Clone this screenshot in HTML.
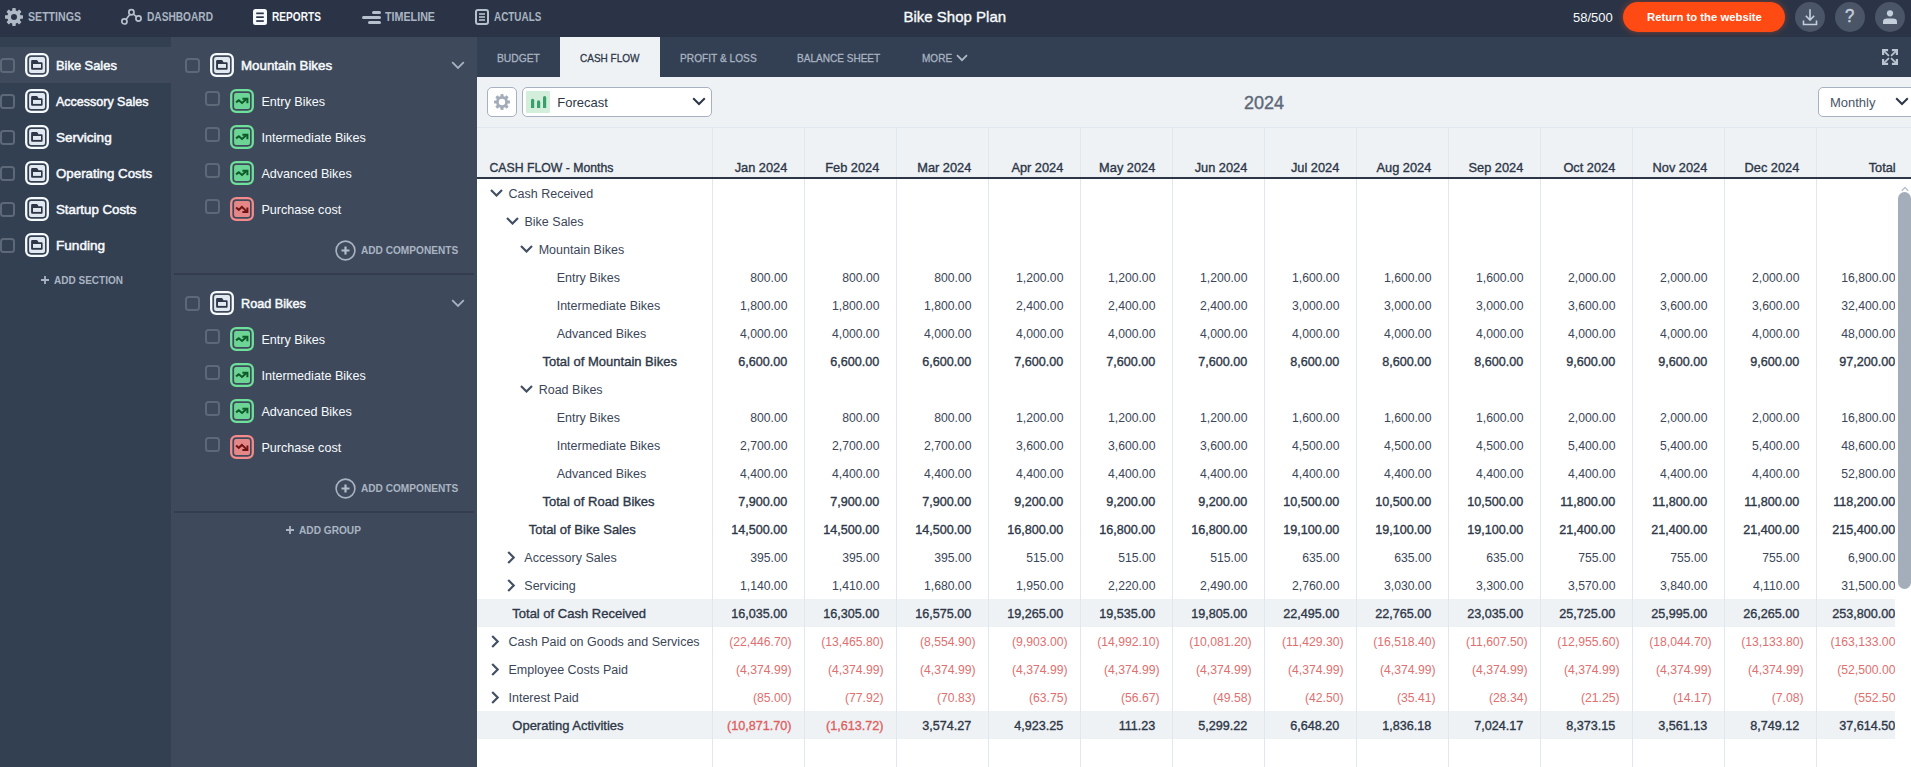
<!DOCTYPE html>
<html><head><meta charset="utf-8"><style>
*{box-sizing:border-box;margin:0;padding:0}
html,body{width:1911px;height:767px;overflow:hidden;background:#eff2f5;font-family:"Liberation Sans",sans-serif}
.abs{position:absolute}
#nav{position:absolute;left:0;top:0;width:1911px;height:37px;background:#2b3446}
.nt{position:absolute;top:9.8px;font-size:12px;font-weight:bold;color:#aab4c2;line-height:14px;white-space:nowrap}
#left{position:absolute;left:0;top:37px;width:171px;height:730px;background:#334052}
#mid{position:absolute;left:171px;top:37px;width:306px;height:730px;background:#3e4a5c}
#hl{position:absolute;left:0;top:47px;width:171px;height:36px;background:#3e4a5c}
.cb{position:absolute;width:15px;height:15px;border:2px solid #5d6879;border-radius:3.5px}
.ic{position:absolute;width:24px;height:24px}
.ic svg{display:block}
.sname{position:absolute;font-size:13.3px;-webkit-text-stroke:0.5px #f7fafc;color:#f7fafc;line-height:20px;white-space:nowrap}
.iname{position:absolute;font-size:12.6px;color:#f7fafc;line-height:20px;white-space:nowrap}
.gchev{position:absolute}
.addc{position:absolute}
.addtxt{position:absolute;font-size:11px;font-weight:bold;color:#aab4c2;line-height:16px;white-space:nowrap;transform-origin:0 0}
.divl{position:absolute;left:174px;width:300px;height:2px;background:#333d4f}
#main{position:absolute;left:477px;top:37px;width:1434px;height:730px;background:#eff2f5;overflow:hidden}
#tabs{position:absolute;left:0;top:0;width:1434px;height:40px;background:#334053}
.tab{position:absolute;top:1px;height:40px;line-height:40px;font-size:11.5px;color:#a9b3c1;-webkit-text-stroke:0.3px currentColor;white-space:nowrap}
.tab.act{background:#eff2f5;color:#2d3748;text-align:center}
#tb{position:absolute;left:0;top:40px;width:1434px;height:50px;background:#eff2f5}
#hdr{position:absolute;left:0;top:90px;width:1434px;height:52px;background:#eff2f5;border-top:1px solid #e1e7ee;border-bottom:2px solid #2d3748}
.hd{position:absolute;top:34px;font-size:12.8px;-webkit-text-stroke:0.35px #2d3748;color:#2d3748;line-height:14px;white-space:nowrap}
#body{position:absolute;left:0;top:142px;width:1434px;height:588px;background:#fff}
.vl{position:absolute;top:127px;width:1px;height:640px;background:#e1e7ee}
.row{position:absolute;left:477px;width:1418px;height:28px;font-size:12.5px;color:#3b4658;line-height:28px}
.row.shade{background:#eff2f5}
.lab{position:absolute;top:1px;white-space:nowrap}
.bold .lab{font-size:13px;-webkit-text-stroke:0.35px #2d3748;color:#2d3748}
.num{position:absolute;top:1px;font-size:12.2px;white-space:nowrap}
.bold .num{font-size:12.6px;-webkit-text-stroke:0.35px currentColor;color:#2d3748}
.neg{color:#de7070}
.bold .neg{color:#de5f5f;-webkit-text-stroke:0.35px #de5f5f}
.hp{visibility:hidden}
.chev{position:absolute;line-height:0}
.chev svg{display:block}
#clip{position:absolute;left:1895px;top:179px;width:16px;height:588px;background:#fff}
</style></head><body>
<div id="nav">
  <svg class="abs" style="left:5px;top:8px" width="18" height="18" viewBox="0 0 18 18"><path fill="#b0bac7" fill-rule="evenodd" d="M15.47 7.27L17.83 7.28A9.00 9.00 0 0 1 17.83 10.72L15.47 10.73A6.70 6.70 0 0 1 14.80 12.35L16.46 14.03A9.00 9.00 0 0 1 14.03 16.46L12.35 14.80A6.70 6.70 0 0 1 10.73 15.47L10.72 17.83A9.00 9.00 0 0 1 7.28 17.83L7.27 15.47A6.70 6.70 0 0 1 5.65 14.80L3.97 16.46A9.00 9.00 0 0 1 1.54 14.03L3.20 12.35A6.70 6.70 0 0 1 2.53 10.73L0.17 10.72A9.00 9.00 0 0 1 0.17 7.28L2.53 7.27A6.70 6.70 0 0 1 3.20 5.65L1.54 3.97A9.00 9.00 0 0 1 3.97 1.54L5.65 3.20A6.70 6.70 0 0 1 7.27 2.53L7.28 0.17A9.00 9.00 0 0 1 10.72 0.17L10.73 2.53A6.70 6.70 0 0 1 12.35 3.20L14.03 1.54A9.00 9.00 0 0 1 16.46 3.97L14.80 5.65A6.70 6.70 0 0 1 15.47 7.27ZM12.00 9.00A3.00 3.00 0 1 0 6.00 9.00A3.00 3.00 0 1 0 12.00 9.00Z"/></svg>
  <div class="nt" style="left:28px;transform:scaleX(0.8833);transform-origin:0 0;">SETTINGS</div>
  <svg class="abs" style="left:119px;top:7px" width="24" height="20" viewBox="0 0 24 20"><path d="M5.4 14.4 L12.4 5.4 M12.4 5.4 L19.5 11.5" stroke="#b7c1cd" stroke-width="1.6" fill="none"/><circle cx="5.4" cy="14.4" r="2.6" fill="#2b3446" stroke="#b7c1cd" stroke-width="1.7"/><circle cx="12.4" cy="5.3" r="2.6" fill="#2b3446" stroke="#b7c1cd" stroke-width="1.7"/><circle cx="19.5" cy="11.5" r="2.6" fill="#2b3446" stroke="#b7c1cd" stroke-width="1.7"/></svg>
  <div class="nt" style="left:146.9px;transform:scaleX(0.8462);transform-origin:0 0;">DASHBOARD</div>
  <svg class="abs" style="left:253px;top:9px" width="14" height="16" viewBox="0 0 14 16"><rect x="0" y="0" width="14" height="16" rx="2.5" fill="#f7fafc"/><rect x="3.2" y="3.5" width="7.6" height="1.7" fill="#2b3446"/><rect x="3.2" y="7.3" width="7.6" height="1.7" fill="#2b3446"/><rect x="3.2" y="11.2" width="7.6" height="1.7" fill="#2b3446"/></svg>
  <div class="nt" style="left:272.3px;color:#f7fafc;transform:scaleX(0.8451);transform-origin:0 0;">REPORTS</div>
  <svg class="abs" style="left:362px;top:10px" width="19" height="15" viewBox="0 0 19 15"><path d="M11.5 2.5 h6 M1.5 7.5 h16 M7.5 12.5 h10" stroke="#b7c1cd" stroke-width="3" stroke-linecap="round"/></svg>
  <div class="nt" style="left:385px;transform:scaleX(0.8932);transform-origin:0 0;">TIMELINE</div>
  <svg class="abs" style="left:475px;top:9px" width="14" height="16" viewBox="0 0 14 16"><rect x="1" y="1" width="12" height="14" rx="2" fill="none" stroke="#b7c1cd" stroke-width="2"/><rect x="4" y="4.2" width="6" height="1.6" fill="#b7c1cd"/><rect x="4" y="7.2" width="6" height="1.6" fill="#b7c1cd"/><rect x="4" y="10.2" width="6" height="1.6" fill="#b7c1cd"/></svg>
  <div class="nt" style="left:494px;transform:scaleX(0.8249);transform-origin:0 0;">ACTUALS</div>
  <div class="abs" style="left:903.5px;top:8px;font-size:15px;color:#f7fafc;-webkit-text-stroke:0.35px #f7fafc;line-height:17px;white-space:nowrap">Bike Shop Plan</div>
  <div class="abs" style="left:1573px;top:10px;font-size:13px;color:#f7fafc;line-height:15px;white-space:nowrap">58/500</div>
  <div class="abs" style="left:1623px;top:2px;width:162px;height:30px;border-radius:15px;background:#ff4a14;box-shadow:0 0 6px rgba(255,80,20,0.45);"></div>
  <div class="abs" style="left:1647px;top:10px;font-size:11.3px;font-weight:bold;color:#fff;line-height:14px;white-space:nowrap">Return to the website</div>
  <div class="abs" style="left:1795px;top:2px;width:30px;height:30px;border-radius:50%;background:#4a5568"></div>
  <div class="abs" style="left:1835px;top:2px;width:30px;height:30px;border-radius:50%;background:#4a5568"></div>
  <div class="abs" style="left:1875px;top:2px;width:30px;height:30px;border-radius:50%;background:#4a5568"></div>
  <svg class="abs" style="left:1802px;top:9px" width="16" height="17" viewBox="0 0 16 17"><path d="M8 0.2 V11 M3.8 6.8 L8 11 L12.2 6.8 M1.5 11.5 V15.5 H14.5 V11.5" fill="none" stroke="#c5cfdb" stroke-width="1.6"/></svg>
  <div class="abs" style="left:1845.2px;top:6px;font-size:19px;color:#c5cfdb;-webkit-text-stroke:0.5px #c5cfdb;line-height:20px;transform:scaleX(0.88);transform-origin:0 0">?</div>
  <svg class="abs" style="left:1882px;top:9px" width="16" height="16" viewBox="0 0 16 16"><circle cx="8" cy="4.3" r="3.1" fill="#c5cfdb"/><path d="M1 15 V12.5 Q1 9.5 5 9.5 H11 Q15 9.5 15 12.5 V15 Z" fill="#c5cfdb"/></svg>
</div>
<div id="left"></div>
<div id="hl"></div>
<div id="mid"></div>
<div class="cb" style="left:0px;top:58px"></div><div class="ic" style="left:25px;top:53px"><svg width="24" height="24" viewBox="0 0 24 24"><rect x="1.2" y="1.2" width="21.6" height="21.6" rx="5" fill="none" stroke="#f7fafc" stroke-width="2.3"/><rect x="4.1" y="4.1" width="15.9" height="15.9" rx="2" fill="#e2e8f0"/><path d="M6.1 8.3 Q6.1 7.1 7.3 7.1 H11.5 Q12.6 7.1 13.5 9.2 H16.6 Q17.6 9.2 17.6 10.2 V15.8 Q17.6 16.8 16.6 16.8 H7.1 Q6.1 16.8 6.1 15.8 Z" fill="#2d3748"/><rect x="8" y="11" width="8" height="3.9" fill="#e2e8f0"/></svg></div><div class="sname" style="left:56px;top:55.5px;transform:scaleX(0.9683);transform-origin:0 0;">Bike Sales</div><div class="cb" style="left:0px;top:94px"></div><div class="ic" style="left:25px;top:89px"><svg width="24" height="24" viewBox="0 0 24 24"><rect x="1.2" y="1.2" width="21.6" height="21.6" rx="5" fill="none" stroke="#f7fafc" stroke-width="2.3"/><rect x="4.1" y="4.1" width="15.9" height="15.9" rx="2" fill="#e2e8f0"/><path d="M6.1 8.3 Q6.1 7.1 7.3 7.1 H11.5 Q12.6 7.1 13.5 9.2 H16.6 Q17.6 9.2 17.6 10.2 V15.8 Q17.6 16.8 16.6 16.8 H7.1 Q6.1 16.8 6.1 15.8 Z" fill="#2d3748"/><rect x="8" y="11" width="8" height="3.9" fill="#e2e8f0"/></svg></div><div class="sname" style="left:56px;top:91.5px;transform:scaleX(0.9400);transform-origin:0 0;">Accessory Sales</div><div class="cb" style="left:0px;top:130px"></div><div class="ic" style="left:25px;top:125px"><svg width="24" height="24" viewBox="0 0 24 24"><rect x="1.2" y="1.2" width="21.6" height="21.6" rx="5" fill="none" stroke="#f7fafc" stroke-width="2.3"/><rect x="4.1" y="4.1" width="15.9" height="15.9" rx="2" fill="#e2e8f0"/><path d="M6.1 8.3 Q6.1 7.1 7.3 7.1 H11.5 Q12.6 7.1 13.5 9.2 H16.6 Q17.6 9.2 17.6 10.2 V15.8 Q17.6 16.8 16.6 16.8 H7.1 Q6.1 16.8 6.1 15.8 Z" fill="#2d3748"/><rect x="8" y="11" width="8" height="3.9" fill="#e2e8f0"/></svg></div><div class="sname" style="left:56px;top:127.5px;transform:scaleX(1.0182);transform-origin:0 0;">Servicing</div><div class="cb" style="left:0px;top:166px"></div><div class="ic" style="left:25px;top:161px"><svg width="24" height="24" viewBox="0 0 24 24"><rect x="1.2" y="1.2" width="21.6" height="21.6" rx="5" fill="none" stroke="#f7fafc" stroke-width="2.3"/><rect x="4.1" y="4.1" width="15.9" height="15.9" rx="2" fill="#e2e8f0"/><path d="M6.1 8.3 Q6.1 7.1 7.3 7.1 H11.5 Q12.6 7.1 13.5 9.2 H16.6 Q17.6 9.2 17.6 10.2 V15.8 Q17.6 16.8 16.6 16.8 H7.1 Q6.1 16.8 6.1 15.8 Z" fill="#2d3748"/><rect x="8" y="11" width="8" height="3.9" fill="#e2e8f0"/></svg></div><div class="sname" style="left:56px;top:163.5px;transform:scaleX(1.0002);transform-origin:0 0;">Operating Costs</div><div class="cb" style="left:0px;top:202px"></div><div class="ic" style="left:25px;top:197px"><svg width="24" height="24" viewBox="0 0 24 24"><rect x="1.2" y="1.2" width="21.6" height="21.6" rx="5" fill="none" stroke="#f7fafc" stroke-width="2.3"/><rect x="4.1" y="4.1" width="15.9" height="15.9" rx="2" fill="#e2e8f0"/><path d="M6.1 8.3 Q6.1 7.1 7.3 7.1 H11.5 Q12.6 7.1 13.5 9.2 H16.6 Q17.6 9.2 17.6 10.2 V15.8 Q17.6 16.8 16.6 16.8 H7.1 Q6.1 16.8 6.1 15.8 Z" fill="#2d3748"/><rect x="8" y="11" width="8" height="3.9" fill="#e2e8f0"/></svg></div><div class="sname" style="left:56px;top:199.5px;transform:scaleX(0.9976);transform-origin:0 0;">Startup Costs</div><div class="cb" style="left:0px;top:238px"></div><div class="ic" style="left:25px;top:233px"><svg width="24" height="24" viewBox="0 0 24 24"><rect x="1.2" y="1.2" width="21.6" height="21.6" rx="5" fill="none" stroke="#f7fafc" stroke-width="2.3"/><rect x="4.1" y="4.1" width="15.9" height="15.9" rx="2" fill="#e2e8f0"/><path d="M6.1 8.3 Q6.1 7.1 7.3 7.1 H11.5 Q12.6 7.1 13.5 9.2 H16.6 Q17.6 9.2 17.6 10.2 V15.8 Q17.6 16.8 16.6 16.8 H7.1 Q6.1 16.8 6.1 15.8 Z" fill="#2d3748"/><rect x="8" y="11" width="8" height="3.9" fill="#e2e8f0"/></svg></div><div class="sname" style="left:56px;top:235.5px;transform:scaleX(1.0208);transform-origin:0 0;">Funding</div>
<svg class="abs" style="left:41px;top:276px" width="8" height="8" viewBox="0 0 8 8"><path d="M4 0 V8 M0 4 H8" stroke="#aab4c2" stroke-width="1.8"/></svg>
<div class="addtxt" style="left:54.4px;top:272px;transform:scaleX(0.9096);transform-origin:0 0;">ADD SECTION</div>
<div class="cb" style="left:185px;top:58px"></div><div class="ic" style="left:210px;top:53px"><svg width="24" height="24" viewBox="0 0 24 24"><rect x="1.2" y="1.2" width="21.6" height="21.6" rx="5" fill="none" stroke="#f7fafc" stroke-width="2.3"/><rect x="4.1" y="4.1" width="15.9" height="15.9" rx="2" fill="#e2e8f0"/><path d="M6.1 8.3 Q6.1 7.1 7.3 7.1 H11.5 Q12.6 7.1 13.5 9.2 H16.6 Q17.6 9.2 17.6 10.2 V15.8 Q17.6 16.8 16.6 16.8 H7.1 Q6.1 16.8 6.1 15.8 Z" fill="#2d3748"/><rect x="8" y="11" width="8" height="3.9" fill="#e2e8f0"/></svg></div><div class="sname" style="left:241.4px;top:55.5px;transform:scaleX(1.0022);transform-origin:0 0;">Mountain Bikes</div><svg class="gchev" style="left:451px;top:61px" width="14" height="9" viewBox="0 0 14 9"><path d="M1.2 1.2 L7 7 L12.8 1.2" fill="none" stroke="#a8b2c0" stroke-width="1.8"/></svg><div class="cb" style="left:205px;top:91px"></div><div class="ic" style="left:230px;top:89px"><svg width="24" height="24" viewBox="0 0 24 24"><rect x="1.2" y="1.2" width="21.6" height="21.6" rx="5" fill="none" stroke="#6fe09a" stroke-width="2.3"/><rect x="4.1" y="4.1" width="15.9" height="15.9" rx="2" fill="#6cd494"/><path d="M6.1 13.4 L8.8 11.2 L12 13.9 L16.6 9.9" fill="none" stroke="#0f5a2a" stroke-width="2"/><path d="M12.4 9.7 H17.4 V14.2" fill="none" stroke="#0f5a2a" stroke-width="2"/></svg></div><div class="iname" style="left:261.4px;top:92px">Entry Bikes</div><div class="cb" style="left:205px;top:127px"></div><div class="ic" style="left:230px;top:125px"><svg width="24" height="24" viewBox="0 0 24 24"><rect x="1.2" y="1.2" width="21.6" height="21.6" rx="5" fill="none" stroke="#6fe09a" stroke-width="2.3"/><rect x="4.1" y="4.1" width="15.9" height="15.9" rx="2" fill="#6cd494"/><path d="M6.1 13.4 L8.8 11.2 L12 13.9 L16.6 9.9" fill="none" stroke="#0f5a2a" stroke-width="2"/><path d="M12.4 9.7 H17.4 V14.2" fill="none" stroke="#0f5a2a" stroke-width="2"/></svg></div><div class="iname" style="left:261.4px;top:128px">Intermediate Bikes</div><div class="cb" style="left:205px;top:163px"></div><div class="ic" style="left:230px;top:161px"><svg width="24" height="24" viewBox="0 0 24 24"><rect x="1.2" y="1.2" width="21.6" height="21.6" rx="5" fill="none" stroke="#6fe09a" stroke-width="2.3"/><rect x="4.1" y="4.1" width="15.9" height="15.9" rx="2" fill="#6cd494"/><path d="M6.1 13.4 L8.8 11.2 L12 13.9 L16.6 9.9" fill="none" stroke="#0f5a2a" stroke-width="2"/><path d="M12.4 9.7 H17.4 V14.2" fill="none" stroke="#0f5a2a" stroke-width="2"/></svg></div><div class="iname" style="left:261.4px;top:164px">Advanced Bikes</div><div class="cb" style="left:205px;top:199px"></div><div class="ic" style="left:230px;top:197px"><svg width="24" height="24" viewBox="0 0 24 24"><rect x="1.2" y="1.2" width="21.6" height="21.6" rx="5" fill="none" stroke="#f48a8a" stroke-width="2.3"/><rect x="4.1" y="4.1" width="15.9" height="15.9" rx="2" fill="#e68787"/><path d="M6.1 10.4 L8.8 12.8 L11.9 9.9 L16.6 14.4" fill="none" stroke="#6e1414" stroke-width="2"/><path d="M12.4 14.9 H17.4 V10.4" fill="none" stroke="#6e1414" stroke-width="2"/></svg></div><div class="iname" style="left:261.4px;top:200px">Purchase cost</div><svg class="addc" style="left:335.3px;top:239.5px" width="21" height="21" viewBox="0 0 21 21"><circle cx="10.5" cy="10.5" r="9.4" fill="none" stroke="#a8b2c0" stroke-width="1.6"/><path d="M10.5 6.5 v8 M6.5 10.5 h8" stroke="#b4bdca" stroke-width="2.2"/></svg><div class="addtxt" style="left:361px;top:242px;transform:scaleX(0.9189);transform-origin:0 0;">ADD COMPONENTS</div><div class="divl" style="top:273px"></div>
<div class="cb" style="left:185px;top:296px"></div><div class="ic" style="left:210px;top:291px"><svg width="24" height="24" viewBox="0 0 24 24"><rect x="1.2" y="1.2" width="21.6" height="21.6" rx="5" fill="none" stroke="#f7fafc" stroke-width="2.3"/><rect x="4.1" y="4.1" width="15.9" height="15.9" rx="2" fill="#e2e8f0"/><path d="M6.1 8.3 Q6.1 7.1 7.3 7.1 H11.5 Q12.6 7.1 13.5 9.2 H16.6 Q17.6 9.2 17.6 10.2 V15.8 Q17.6 16.8 16.6 16.8 H7.1 Q6.1 16.8 6.1 15.8 Z" fill="#2d3748"/><rect x="8" y="11" width="8" height="3.9" fill="#e2e8f0"/></svg></div><div class="sname" style="left:241.4px;top:293.5px;transform:scaleX(0.9530);transform-origin:0 0;">Road Bikes</div><svg class="gchev" style="left:451px;top:299px" width="14" height="9" viewBox="0 0 14 9"><path d="M1.2 1.2 L7 7 L12.8 1.2" fill="none" stroke="#a8b2c0" stroke-width="1.8"/></svg><div class="cb" style="left:205px;top:329px"></div><div class="ic" style="left:230px;top:327px"><svg width="24" height="24" viewBox="0 0 24 24"><rect x="1.2" y="1.2" width="21.6" height="21.6" rx="5" fill="none" stroke="#6fe09a" stroke-width="2.3"/><rect x="4.1" y="4.1" width="15.9" height="15.9" rx="2" fill="#6cd494"/><path d="M6.1 13.4 L8.8 11.2 L12 13.9 L16.6 9.9" fill="none" stroke="#0f5a2a" stroke-width="2"/><path d="M12.4 9.7 H17.4 V14.2" fill="none" stroke="#0f5a2a" stroke-width="2"/></svg></div><div class="iname" style="left:261.4px;top:330px">Entry Bikes</div><div class="cb" style="left:205px;top:365px"></div><div class="ic" style="left:230px;top:363px"><svg width="24" height="24" viewBox="0 0 24 24"><rect x="1.2" y="1.2" width="21.6" height="21.6" rx="5" fill="none" stroke="#6fe09a" stroke-width="2.3"/><rect x="4.1" y="4.1" width="15.9" height="15.9" rx="2" fill="#6cd494"/><path d="M6.1 13.4 L8.8 11.2 L12 13.9 L16.6 9.9" fill="none" stroke="#0f5a2a" stroke-width="2"/><path d="M12.4 9.7 H17.4 V14.2" fill="none" stroke="#0f5a2a" stroke-width="2"/></svg></div><div class="iname" style="left:261.4px;top:366px">Intermediate Bikes</div><div class="cb" style="left:205px;top:401px"></div><div class="ic" style="left:230px;top:399px"><svg width="24" height="24" viewBox="0 0 24 24"><rect x="1.2" y="1.2" width="21.6" height="21.6" rx="5" fill="none" stroke="#6fe09a" stroke-width="2.3"/><rect x="4.1" y="4.1" width="15.9" height="15.9" rx="2" fill="#6cd494"/><path d="M6.1 13.4 L8.8 11.2 L12 13.9 L16.6 9.9" fill="none" stroke="#0f5a2a" stroke-width="2"/><path d="M12.4 9.7 H17.4 V14.2" fill="none" stroke="#0f5a2a" stroke-width="2"/></svg></div><div class="iname" style="left:261.4px;top:402px">Advanced Bikes</div><div class="cb" style="left:205px;top:437px"></div><div class="ic" style="left:230px;top:435px"><svg width="24" height="24" viewBox="0 0 24 24"><rect x="1.2" y="1.2" width="21.6" height="21.6" rx="5" fill="none" stroke="#f48a8a" stroke-width="2.3"/><rect x="4.1" y="4.1" width="15.9" height="15.9" rx="2" fill="#e68787"/><path d="M6.1 10.4 L8.8 12.8 L11.9 9.9 L16.6 14.4" fill="none" stroke="#6e1414" stroke-width="2"/><path d="M12.4 14.9 H17.4 V10.4" fill="none" stroke="#6e1414" stroke-width="2"/></svg></div><div class="iname" style="left:261.4px;top:438px">Purchase cost</div><svg class="addc" style="left:335.3px;top:477.5px" width="21" height="21" viewBox="0 0 21 21"><circle cx="10.5" cy="10.5" r="9.4" fill="none" stroke="#a8b2c0" stroke-width="1.6"/><path d="M10.5 6.5 v8 M6.5 10.5 h8" stroke="#b4bdca" stroke-width="2.2"/></svg><div class="addtxt" style="left:361px;top:480px;transform:scaleX(0.9189);transform-origin:0 0;">ADD COMPONENTS</div><div class="divl" style="top:511px"></div>
<svg class="abs" style="left:286px;top:526px" width="8" height="8" viewBox="0 0 8 8"><path d="M4 0 V8 M0 4 H8" stroke="#aab4c2" stroke-width="1.8"/></svg>
<div class="addtxt" style="left:299.3px;top:522px;transform:scaleX(0.9209);transform-origin:0 0;">ADD GROUP</div>
<div id="main">
  <div id="tabs">
    <div class="abs" style="left:83px;top:0;width:100px;height:40px;background:#eff2f5"></div>
    <div class="tab" style="left:20px;transform:scaleX(0.8941);transform-origin:0 0;">BUDGET</div>
    <div class="tab" style="left:103px;color:#2d3748;transform:scaleX(0.8699);transform-origin:0 0;">CASH FLOW</div>
    <div class="tab" style="left:203px;transform:scaleX(0.8842);transform-origin:0 0;">PROFIT &amp; LOSS</div>
    <div class="tab" style="left:320.3px;transform:scaleX(0.8738);transform-origin:0 0;">BALANCE SHEET</div>
    <div class="tab" style="left:444.7px;transform:scaleX(0.8731);transform-origin:0 0;">MORE</div>
    <svg class="abs" style="left:479px;top:17px" width="12" height="8" viewBox="0 0 12 8"><path d="M1 1.2 L6 6.2 L11 1.2" fill="none" stroke="#b0bac6" stroke-width="1.7"/></svg>
    <svg class="abs" style="left:1405px;top:12px" width="16" height="16" viewBox="0 0 16 16"><g fill="none" stroke="#bac4d1" stroke-width="2.2" stroke-linecap="butt"><path d="M1.1 6.1 V1.1 H6.1 M9.9 1.1 H14.9 V6.1 M1.1 9.9 V14.9 H6.1 M9.9 14.9 H14.9 V9.9"/><path stroke-width="1.7" d="M1.6 1.6 L6.9 6.9 M14.4 1.6 L9.1 6.9 M1.6 14.4 L6.9 9.1 M14.4 14.4 L9.1 9.1"/></g></svg>
  </div>
  <div id="tb"></div>
  <div class="abs" style="left:10px;top:50px;width:30px;height:30px;border:1px solid #a7b1bf;border-radius:5px;background:#fff"></div>
  <svg class="abs" style="left:17px;top:57px" width="16" height="16" viewBox="0 0 16 16"><path fill="#a3adba" fill-rule="evenodd" d="M13.80 6.45L15.85 6.47A8.00 8.00 0 0 1 15.85 9.53L13.80 9.55A6.00 6.00 0 0 1 13.20 11.00L14.63 12.47A8.00 8.00 0 0 1 12.47 14.63L11.00 13.20A6.00 6.00 0 0 1 9.55 13.80L9.53 15.85A8.00 8.00 0 0 1 6.47 15.85L6.45 13.80A6.00 6.00 0 0 1 5.00 13.20L3.53 14.63A8.00 8.00 0 0 1 1.37 12.47L2.80 11.00A6.00 6.00 0 0 1 2.20 9.55L0.15 9.53A8.00 8.00 0 0 1 0.15 6.47L2.20 6.45A6.00 6.00 0 0 1 2.80 5.00L1.37 3.53A8.00 8.00 0 0 1 3.53 1.37L5.00 2.80A6.00 6.00 0 0 1 6.45 2.20L6.47 0.15A8.00 8.00 0 0 1 9.53 0.15L9.55 2.20A6.00 6.00 0 0 1 11.00 2.80L12.47 1.37A8.00 8.00 0 0 1 14.63 3.53L13.20 5.00A6.00 6.00 0 0 1 13.80 6.45ZM11.20 8.00A3.20 3.20 0 1 0 4.80 8.00A3.20 3.20 0 1 0 11.20 8.00Z"/></svg>
  <div class="abs" style="left:45px;top:50px;width:190px;height:30px;border:1px solid #a7b1bf;border-radius:5px;background:#fff"></div>
  <div class="abs" style="left:49px;top:54px;width:24px;height:22px;background:#d3eedb;border-radius:1px"></div>
  <svg class="abs" style="left:49px;top:54px" width="24" height="22" viewBox="0 0 24 22"><g fill="#38a169"><path d="M5 17 V9.3 a1.6 1.6 0 0 1 3.2 0 V17z"/><path d="M11 17 V10.9 a1.6 1.6 0 0 1 3.2 0 V17z"/><path d="M17 17 V6.6 a1.6 1.6 0 0 1 3.2 0 V17z"/></g></svg>
  <div class="abs" style="left:80.3px;top:58px;font-size:13px;color:#2d3748;line-height:15px">Forecast</div>
  <svg class="abs" style="left:215px;top:60px" width="14" height="9" viewBox="0 0 14 9"><path d="M1.2 1.2 L7 7 L12.8 1.2" fill="none" stroke="#2d3748" stroke-width="2"/></svg>
  <div class="abs" style="left:767px;top:56px;font-size:18px;color:#5d6879;-webkit-text-stroke:0.4px #5d6879;line-height:20px">2024</div>
  <div class="abs" style="left:1341px;top:50px;width:110px;height:30px;border:1px solid #a7b1bf;border-radius:5px;background:#fff"></div>
  <div class="abs" style="left:1352.9px;top:58px;font-size:13px;color:#4a5568;line-height:15px">Monthly</div>
  <svg class="abs" style="left:1418px;top:60px" width="14" height="9" viewBox="0 0 14 9"><path d="M1.2 1.2 L7 7 L12.8 1.2" fill="none" stroke="#2d3748" stroke-width="2"/></svg>
</div>
<div class="abs" style="left:477px;top:127px;width:1434px;height:50px;background:#eff2f5;border-top:1px solid #e1e7ee"></div>
<div class="abs" style="left:477px;top:179px;width:1434px;height:588px;background:#fff"></div>
<div class="row" style="top:179px"><span class="chev" style="left:12.5px;top:10.3px"><svg width="13" height="8" viewBox="0 0 13 8"><path d="M1 1 L6.5 6.5 L12 1" fill="none" stroke="#435064" stroke-width="2.2"/></svg></span><span class="lab" style="left:31.5px">Cash Received</span></div><div class="row" style="top:207px"><span class="chev" style="left:28.5px;top:10.3px"><svg width="13" height="8" viewBox="0 0 13 8"><path d="M1 1 L6.5 6.5 L12 1" fill="none" stroke="#435064" stroke-width="2.2"/></svg></span><span class="lab" style="left:47.5px">Bike Sales</span></div><div class="row" style="top:235px"><span class="chev" style="left:42.5px;top:10.3px"><svg width="13" height="8" viewBox="0 0 13 8"><path d="M1 1 L6.5 6.5 L12 1" fill="none" stroke="#435064" stroke-width="2.2"/></svg></span><span class="lab" style="left:61.7px">Mountain Bikes</span></div><div class="row" style="top:263px"><span class="lab" style="left:79.7px">Entry Bikes</span><span class="num" style="right:1103.5px">800.00<span class="hp">)</span></span><span class="num" style="right:1011.5px">800.00<span class="hp">)</span></span><span class="num" style="right:919.5px">800.00<span class="hp">)</span></span><span class="num" style="right:827.5px">1,200.00<span class="hp">)</span></span><span class="num" style="right:735.5px">1,200.00<span class="hp">)</span></span><span class="num" style="right:643.5px">1,200.00<span class="hp">)</span></span><span class="num" style="right:551.5px">1,600.00<span class="hp">)</span></span><span class="num" style="right:459.5px">1,600.00<span class="hp">)</span></span><span class="num" style="right:367.5px">1,600.00<span class="hp">)</span></span><span class="num" style="right:275.5px">2,000.00<span class="hp">)</span></span><span class="num" style="right:183.5px">2,000.00<span class="hp">)</span></span><span class="num" style="right:91.5px">2,000.00<span class="hp">)</span></span><span class="num" style="right:-4.5px">16,800.00<span class="hp">)</span></span></div><div class="row" style="top:291px"><span class="lab" style="left:79.7px">Intermediate Bikes</span><span class="num" style="right:1103.5px">1,800.00<span class="hp">)</span></span><span class="num" style="right:1011.5px">1,800.00<span class="hp">)</span></span><span class="num" style="right:919.5px">1,800.00<span class="hp">)</span></span><span class="num" style="right:827.5px">2,400.00<span class="hp">)</span></span><span class="num" style="right:735.5px">2,400.00<span class="hp">)</span></span><span class="num" style="right:643.5px">2,400.00<span class="hp">)</span></span><span class="num" style="right:551.5px">3,000.00<span class="hp">)</span></span><span class="num" style="right:459.5px">3,000.00<span class="hp">)</span></span><span class="num" style="right:367.5px">3,000.00<span class="hp">)</span></span><span class="num" style="right:275.5px">3,600.00<span class="hp">)</span></span><span class="num" style="right:183.5px">3,600.00<span class="hp">)</span></span><span class="num" style="right:91.5px">3,600.00<span class="hp">)</span></span><span class="num" style="right:-4.5px">32,400.00<span class="hp">)</span></span></div><div class="row" style="top:319px"><span class="lab" style="left:79.7px">Advanced Bikes</span><span class="num" style="right:1103.5px">4,000.00<span class="hp">)</span></span><span class="num" style="right:1011.5px">4,000.00<span class="hp">)</span></span><span class="num" style="right:919.5px">4,000.00<span class="hp">)</span></span><span class="num" style="right:827.5px">4,000.00<span class="hp">)</span></span><span class="num" style="right:735.5px">4,000.00<span class="hp">)</span></span><span class="num" style="right:643.5px">4,000.00<span class="hp">)</span></span><span class="num" style="right:551.5px">4,000.00<span class="hp">)</span></span><span class="num" style="right:459.5px">4,000.00<span class="hp">)</span></span><span class="num" style="right:367.5px">4,000.00<span class="hp">)</span></span><span class="num" style="right:275.5px">4,000.00<span class="hp">)</span></span><span class="num" style="right:183.5px">4,000.00<span class="hp">)</span></span><span class="num" style="right:91.5px">4,000.00<span class="hp">)</span></span><span class="num" style="right:-4.5px">48,000.00<span class="hp">)</span></span></div><div class="row bold" style="top:347px"><span class="lab" style="left:65.5px">Total of Mountain Bikes</span><span class="num" style="right:1103.5px">6,600.00<span class="hp">)</span></span><span class="num" style="right:1011.5px">6,600.00<span class="hp">)</span></span><span class="num" style="right:919.5px">6,600.00<span class="hp">)</span></span><span class="num" style="right:827.5px">7,600.00<span class="hp">)</span></span><span class="num" style="right:735.5px">7,600.00<span class="hp">)</span></span><span class="num" style="right:643.5px">7,600.00<span class="hp">)</span></span><span class="num" style="right:551.5px">8,600.00<span class="hp">)</span></span><span class="num" style="right:459.5px">8,600.00<span class="hp">)</span></span><span class="num" style="right:367.5px">8,600.00<span class="hp">)</span></span><span class="num" style="right:275.5px">9,600.00<span class="hp">)</span></span><span class="num" style="right:183.5px">9,600.00<span class="hp">)</span></span><span class="num" style="right:91.5px">9,600.00<span class="hp">)</span></span><span class="num" style="right:-4.5px">97,200.00<span class="hp">)</span></span></div><div class="row" style="top:375px"><span class="chev" style="left:42.5px;top:10.3px"><svg width="13" height="8" viewBox="0 0 13 8"><path d="M1 1 L6.5 6.5 L12 1" fill="none" stroke="#435064" stroke-width="2.2"/></svg></span><span class="lab" style="left:61.7px">Road Bikes</span></div><div class="row" style="top:403px"><span class="lab" style="left:79.7px">Entry Bikes</span><span class="num" style="right:1103.5px">800.00<span class="hp">)</span></span><span class="num" style="right:1011.5px">800.00<span class="hp">)</span></span><span class="num" style="right:919.5px">800.00<span class="hp">)</span></span><span class="num" style="right:827.5px">1,200.00<span class="hp">)</span></span><span class="num" style="right:735.5px">1,200.00<span class="hp">)</span></span><span class="num" style="right:643.5px">1,200.00<span class="hp">)</span></span><span class="num" style="right:551.5px">1,600.00<span class="hp">)</span></span><span class="num" style="right:459.5px">1,600.00<span class="hp">)</span></span><span class="num" style="right:367.5px">1,600.00<span class="hp">)</span></span><span class="num" style="right:275.5px">2,000.00<span class="hp">)</span></span><span class="num" style="right:183.5px">2,000.00<span class="hp">)</span></span><span class="num" style="right:91.5px">2,000.00<span class="hp">)</span></span><span class="num" style="right:-4.5px">16,800.00<span class="hp">)</span></span></div><div class="row" style="top:431px"><span class="lab" style="left:79.7px">Intermediate Bikes</span><span class="num" style="right:1103.5px">2,700.00<span class="hp">)</span></span><span class="num" style="right:1011.5px">2,700.00<span class="hp">)</span></span><span class="num" style="right:919.5px">2,700.00<span class="hp">)</span></span><span class="num" style="right:827.5px">3,600.00<span class="hp">)</span></span><span class="num" style="right:735.5px">3,600.00<span class="hp">)</span></span><span class="num" style="right:643.5px">3,600.00<span class="hp">)</span></span><span class="num" style="right:551.5px">4,500.00<span class="hp">)</span></span><span class="num" style="right:459.5px">4,500.00<span class="hp">)</span></span><span class="num" style="right:367.5px">4,500.00<span class="hp">)</span></span><span class="num" style="right:275.5px">5,400.00<span class="hp">)</span></span><span class="num" style="right:183.5px">5,400.00<span class="hp">)</span></span><span class="num" style="right:91.5px">5,400.00<span class="hp">)</span></span><span class="num" style="right:-4.5px">48,600.00<span class="hp">)</span></span></div><div class="row" style="top:459px"><span class="lab" style="left:79.7px">Advanced Bikes</span><span class="num" style="right:1103.5px">4,400.00<span class="hp">)</span></span><span class="num" style="right:1011.5px">4,400.00<span class="hp">)</span></span><span class="num" style="right:919.5px">4,400.00<span class="hp">)</span></span><span class="num" style="right:827.5px">4,400.00<span class="hp">)</span></span><span class="num" style="right:735.5px">4,400.00<span class="hp">)</span></span><span class="num" style="right:643.5px">4,400.00<span class="hp">)</span></span><span class="num" style="right:551.5px">4,400.00<span class="hp">)</span></span><span class="num" style="right:459.5px">4,400.00<span class="hp">)</span></span><span class="num" style="right:367.5px">4,400.00<span class="hp">)</span></span><span class="num" style="right:275.5px">4,400.00<span class="hp">)</span></span><span class="num" style="right:183.5px">4,400.00<span class="hp">)</span></span><span class="num" style="right:91.5px">4,400.00<span class="hp">)</span></span><span class="num" style="right:-4.5px">52,800.00<span class="hp">)</span></span></div><div class="row bold" style="top:487px"><span class="lab" style="left:65.5px">Total of Road Bikes</span><span class="num" style="right:1103.5px">7,900.00<span class="hp">)</span></span><span class="num" style="right:1011.5px">7,900.00<span class="hp">)</span></span><span class="num" style="right:919.5px">7,900.00<span class="hp">)</span></span><span class="num" style="right:827.5px">9,200.00<span class="hp">)</span></span><span class="num" style="right:735.5px">9,200.00<span class="hp">)</span></span><span class="num" style="right:643.5px">9,200.00<span class="hp">)</span></span><span class="num" style="right:551.5px">10,500.00<span class="hp">)</span></span><span class="num" style="right:459.5px">10,500.00<span class="hp">)</span></span><span class="num" style="right:367.5px">10,500.00<span class="hp">)</span></span><span class="num" style="right:275.5px">11,800.00<span class="hp">)</span></span><span class="num" style="right:183.5px">11,800.00<span class="hp">)</span></span><span class="num" style="right:91.5px">11,800.00<span class="hp">)</span></span><span class="num" style="right:-4.5px">118,200.00<span class="hp">)</span></span></div><div class="row bold" style="top:515px"><span class="lab" style="left:51.8px">Total of Bike Sales</span><span class="num" style="right:1103.5px">14,500.00<span class="hp">)</span></span><span class="num" style="right:1011.5px">14,500.00<span class="hp">)</span></span><span class="num" style="right:919.5px">14,500.00<span class="hp">)</span></span><span class="num" style="right:827.5px">16,800.00<span class="hp">)</span></span><span class="num" style="right:735.5px">16,800.00<span class="hp">)</span></span><span class="num" style="right:643.5px">16,800.00<span class="hp">)</span></span><span class="num" style="right:551.5px">19,100.00<span class="hp">)</span></span><span class="num" style="right:459.5px">19,100.00<span class="hp">)</span></span><span class="num" style="right:367.5px">19,100.00<span class="hp">)</span></span><span class="num" style="right:275.5px">21,400.00<span class="hp">)</span></span><span class="num" style="right:183.5px">21,400.00<span class="hp">)</span></span><span class="num" style="right:91.5px">21,400.00<span class="hp">)</span></span><span class="num" style="right:-4.5px">215,400.00<span class="hp">)</span></span></div><div class="row" style="top:543px"><span class="chev" style="left:30.2px;top:7.6px"><svg width="9" height="13" viewBox="0 0 9 13"><path d="M1.2 1 L6.7 6.5 L1.2 12" fill="none" stroke="#435064" stroke-width="2.2"/></svg></span><span class="lab" style="left:47.3px">Accessory Sales</span><span class="num" style="right:1103.5px">395.00<span class="hp">)</span></span><span class="num" style="right:1011.5px">395.00<span class="hp">)</span></span><span class="num" style="right:919.5px">395.00<span class="hp">)</span></span><span class="num" style="right:827.5px">515.00<span class="hp">)</span></span><span class="num" style="right:735.5px">515.00<span class="hp">)</span></span><span class="num" style="right:643.5px">515.00<span class="hp">)</span></span><span class="num" style="right:551.5px">635.00<span class="hp">)</span></span><span class="num" style="right:459.5px">635.00<span class="hp">)</span></span><span class="num" style="right:367.5px">635.00<span class="hp">)</span></span><span class="num" style="right:275.5px">755.00<span class="hp">)</span></span><span class="num" style="right:183.5px">755.00<span class="hp">)</span></span><span class="num" style="right:91.5px">755.00<span class="hp">)</span></span><span class="num" style="right:-4.5px">6,900.00<span class="hp">)</span></span></div><div class="row" style="top:571px"><span class="chev" style="left:30.2px;top:7.6px"><svg width="9" height="13" viewBox="0 0 9 13"><path d="M1.2 1 L6.7 6.5 L1.2 12" fill="none" stroke="#435064" stroke-width="2.2"/></svg></span><span class="lab" style="left:47.3px">Servicing</span><span class="num" style="right:1103.5px">1,140.00<span class="hp">)</span></span><span class="num" style="right:1011.5px">1,410.00<span class="hp">)</span></span><span class="num" style="right:919.5px">1,680.00<span class="hp">)</span></span><span class="num" style="right:827.5px">1,950.00<span class="hp">)</span></span><span class="num" style="right:735.5px">2,220.00<span class="hp">)</span></span><span class="num" style="right:643.5px">2,490.00<span class="hp">)</span></span><span class="num" style="right:551.5px">2,760.00<span class="hp">)</span></span><span class="num" style="right:459.5px">3,030.00<span class="hp">)</span></span><span class="num" style="right:367.5px">3,300.00<span class="hp">)</span></span><span class="num" style="right:275.5px">3,570.00<span class="hp">)</span></span><span class="num" style="right:183.5px">3,840.00<span class="hp">)</span></span><span class="num" style="right:91.5px">4,110.00<span class="hp">)</span></span><span class="num" style="right:-4.5px">31,500.00<span class="hp">)</span></span></div><div class="row shade bold" style="top:599px"><span class="lab" style="left:35.3px">Total of Cash Received</span><span class="num" style="right:1103.5px">16,035.00<span class="hp">)</span></span><span class="num" style="right:1011.5px">16,305.00<span class="hp">)</span></span><span class="num" style="right:919.5px">16,575.00<span class="hp">)</span></span><span class="num" style="right:827.5px">19,265.00<span class="hp">)</span></span><span class="num" style="right:735.5px">19,535.00<span class="hp">)</span></span><span class="num" style="right:643.5px">19,805.00<span class="hp">)</span></span><span class="num" style="right:551.5px">22,495.00<span class="hp">)</span></span><span class="num" style="right:459.5px">22,765.00<span class="hp">)</span></span><span class="num" style="right:367.5px">23,035.00<span class="hp">)</span></span><span class="num" style="right:275.5px">25,725.00<span class="hp">)</span></span><span class="num" style="right:183.5px">25,995.00<span class="hp">)</span></span><span class="num" style="right:91.5px">26,265.00<span class="hp">)</span></span><span class="num" style="right:-4.5px">253,800.00<span class="hp">)</span></span></div><div class="row" style="top:627px"><span class="chev" style="left:14.2px;top:7.6px"><svg width="9" height="13" viewBox="0 0 9 13"><path d="M1.2 1 L6.7 6.5 L1.2 12" fill="none" stroke="#435064" stroke-width="2.2"/></svg></span><span class="lab" style="left:31.5px">Cash Paid on Goods and Services</span><span class="num" style="right:1103.5px"><span class="neg">(22,446.70)</span></span><span class="num" style="right:1011.5px"><span class="neg">(13,465.80)</span></span><span class="num" style="right:919.5px"><span class="neg">(8,554.90)</span></span><span class="num" style="right:827.5px"><span class="neg">(9,903.00)</span></span><span class="num" style="right:735.5px"><span class="neg">(14,992.10)</span></span><span class="num" style="right:643.5px"><span class="neg">(10,081.20)</span></span><span class="num" style="right:551.5px"><span class="neg">(11,429.30)</span></span><span class="num" style="right:459.5px"><span class="neg">(16,518.40)</span></span><span class="num" style="right:367.5px"><span class="neg">(11,607.50)</span></span><span class="num" style="right:275.5px"><span class="neg">(12,955.60)</span></span><span class="num" style="right:183.5px"><span class="neg">(18,044.70)</span></span><span class="num" style="right:91.5px"><span class="neg">(13,133.80)</span></span><span class="num" style="right:-4.5px"><span class="neg">(163,133.00)</span></span></div><div class="row" style="top:655px"><span class="chev" style="left:14.2px;top:7.6px"><svg width="9" height="13" viewBox="0 0 9 13"><path d="M1.2 1 L6.7 6.5 L1.2 12" fill="none" stroke="#435064" stroke-width="2.2"/></svg></span><span class="lab" style="left:31.5px">Employee Costs Paid</span><span class="num" style="right:1103.5px"><span class="neg">(4,374.99)</span></span><span class="num" style="right:1011.5px"><span class="neg">(4,374.99)</span></span><span class="num" style="right:919.5px"><span class="neg">(4,374.99)</span></span><span class="num" style="right:827.5px"><span class="neg">(4,374.99)</span></span><span class="num" style="right:735.5px"><span class="neg">(4,374.99)</span></span><span class="num" style="right:643.5px"><span class="neg">(4,374.99)</span></span><span class="num" style="right:551.5px"><span class="neg">(4,374.99)</span></span><span class="num" style="right:459.5px"><span class="neg">(4,374.99)</span></span><span class="num" style="right:367.5px"><span class="neg">(4,374.99)</span></span><span class="num" style="right:275.5px"><span class="neg">(4,374.99)</span></span><span class="num" style="right:183.5px"><span class="neg">(4,374.99)</span></span><span class="num" style="right:91.5px"><span class="neg">(4,374.99)</span></span><span class="num" style="right:-4.5px"><span class="neg">(52,500.00)</span></span></div><div class="row" style="top:683px"><span class="chev" style="left:14.2px;top:7.6px"><svg width="9" height="13" viewBox="0 0 9 13"><path d="M1.2 1 L6.7 6.5 L1.2 12" fill="none" stroke="#435064" stroke-width="2.2"/></svg></span><span class="lab" style="left:31.5px">Interest Paid</span><span class="num" style="right:1103.5px"><span class="neg">(85.00)</span></span><span class="num" style="right:1011.5px"><span class="neg">(77.92)</span></span><span class="num" style="right:919.5px"><span class="neg">(70.83)</span></span><span class="num" style="right:827.5px"><span class="neg">(63.75)</span></span><span class="num" style="right:735.5px"><span class="neg">(56.67)</span></span><span class="num" style="right:643.5px"><span class="neg">(49.58)</span></span><span class="num" style="right:551.5px"><span class="neg">(42.50)</span></span><span class="num" style="right:459.5px"><span class="neg">(35.41)</span></span><span class="num" style="right:367.5px"><span class="neg">(28.34)</span></span><span class="num" style="right:275.5px"><span class="neg">(21.25)</span></span><span class="num" style="right:183.5px"><span class="neg">(14.17)</span></span><span class="num" style="right:91.5px"><span class="neg">(7.08)</span></span><span class="num" style="right:-4.5px"><span class="neg">(552.50)</span></span></div><div class="row shade bold" style="top:711px"><span class="lab" style="left:35.3px">Operating Activities</span><span class="num" style="right:1103.5px"><span class="neg">(10,871.70)</span></span><span class="num" style="right:1011.5px"><span class="neg">(1,613.72)</span></span><span class="num" style="right:919.5px">3,574.27<span class="hp">)</span></span><span class="num" style="right:827.5px">4,923.25<span class="hp">)</span></span><span class="num" style="right:735.5px">111.23<span class="hp">)</span></span><span class="num" style="right:643.5px">5,299.22<span class="hp">)</span></span><span class="num" style="right:551.5px">6,648.20<span class="hp">)</span></span><span class="num" style="right:459.5px">1,836.18<span class="hp">)</span></span><span class="num" style="right:367.5px">7,024.17<span class="hp">)</span></span><span class="num" style="right:275.5px">8,373.15<span class="hp">)</span></span><span class="num" style="right:183.5px">3,561.13<span class="hp">)</span></span><span class="num" style="right:91.5px">8,749.12<span class="hp">)</span></span><span class="num" style="right:-4.5px">37,614.50<span class="hp">)</span></span></div>
<div class="vl" style="left:712px"></div><div class="vl" style="left:804px"></div><div class="vl" style="left:896px"></div><div class="vl" style="left:988px"></div><div class="vl" style="left:1080px"></div><div class="vl" style="left:1172px"></div><div class="vl" style="left:1264px"></div><div class="vl" style="left:1356px"></div><div class="vl" style="left:1448px"></div><div class="vl" style="left:1540px"></div><div class="vl" style="left:1632px"></div><div class="vl" style="left:1724px"></div><div class="vl" style="left:1816px"></div>
<div class="abs" style="left:477px;top:177px;width:1434px;height:2px;background:#2d3748"></div>
<div class="abs" style="left:477px;top:127px;width:1434px;height:52px">
  <span class="hd" style="left:12.5px;font-size:12.25px">CASH FLOW - Months</span>
</div>
<div class="abs" style="left:0;top:127px;width:1911px;height:52px"><span class="hd" style="right:1123.7px">Jan 2024</span><span class="hd" style="right:1031.7px">Feb 2024</span><span class="hd" style="right:939.7px">Mar 2024</span><span class="hd" style="right:847.7px">Apr 2024</span><span class="hd" style="right:755.7px">May 2024</span><span class="hd" style="right:663.7px">Jun 2024</span><span class="hd" style="right:571.7px">Jul 2024</span><span class="hd" style="right:479.7px">Aug 2024</span><span class="hd" style="right:387.7px">Sep 2024</span><span class="hd" style="right:295.7px">Oct 2024</span><span class="hd" style="right:203.7px">Nov 2024</span><span class="hd" style="right:111.7px">Dec 2024</span><span class="hd" style="right:15.3px">Total</span></div>
<div id="clip"></div>
<svg class="abs" style="left:1901px;top:186px" width="8" height="6" viewBox="0 0 8 6"><path d="M0.8 4.8 L4 1.6 L7.2 4.8" fill="none" stroke="#b8c1cc" stroke-width="1.4"/></svg>
<div class="abs" style="left:1898px;top:192px;width:13px;height:397px;border-radius:6.5px;background:#a4aeba"></div>
</body></html>
